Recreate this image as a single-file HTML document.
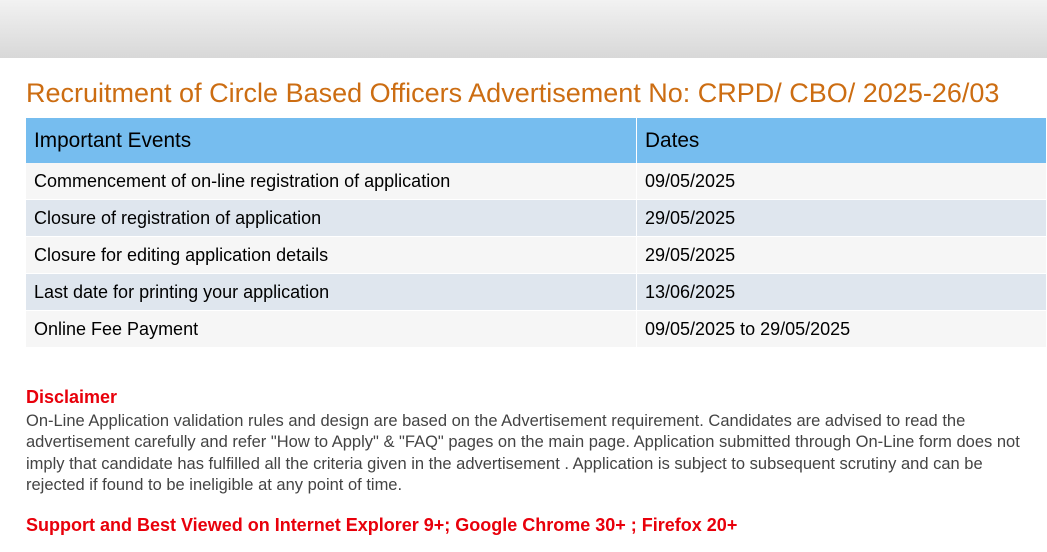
<!DOCTYPE html>
<html><head><style>
body{margin:0;width:1047px;height:552px;overflow:hidden;background:#fff;font-family:"Liberation Sans",Arial,sans-serif}
.top{height:58px;background:linear-gradient(#f2f2f2,#d8d8d8)}
h1{position:absolute;left:26px;top:78px;margin:0;font-weight:normal;font-size:27px;color:#cc6d12;white-space:nowrap}
table{position:absolute;left:26px;top:118px;width:1021px;border-collapse:collapse}
td{font-size:18px;color:#000;padding:0 0 0 8px;height:36px;border-right:1px solid #fff;border-bottom:1px solid #fff}
th{background:#76bdef;font-weight:normal;text-align:left;font-size:20.8px;height:45px;padding:0 0 0 8px;border-right:1px solid #fff}
tr.a td{background:#f6f6f6}tr.b td{background:#dfe6ee}
.d{position:absolute;left:26px;top:387px;font-size:18px;font-weight:bold;color:#e8000b}
.p{position:absolute;left:26px;top:411px;width:1000px;font-size:16.5px;line-height:21.3px;color:#444}
.s{position:absolute;left:26px;top:515px;font-size:18px;font-weight:bold;color:#e8000b;white-space:nowrap}
</style></head><body>
<div class="top"></div>
<h1>Recruitment of Circle Based Officers Advertisement No: CRPD/ CBO/ 2025-26/03</h1>
<table>
<tr><th style="width:602px">Important Events</th><th>Dates</th></tr>
<tr class="a"><td>Commencement of on-line registration of application</td><td>09/05/2025</td></tr>
<tr class="b"><td>Closure of registration of application</td><td>29/05/2025</td></tr>
<tr class="a"><td>Closure for editing application details</td><td>29/05/2025</td></tr>
<tr class="b"><td>Last date for printing your application</td><td>13/06/2025</td></tr>
<tr class="a"><td>Online Fee Payment</td><td>09/05/2025 to 29/05/2025</td></tr>
</table>
<div class="d">Disclaimer</div>
<div class="p">On-Line Application validation rules and design are based on the Advertisement requirement. Candidates are advised to read the advertisement carefully and refer "How to Apply" &amp; "FAQ" pages on the main page. Application submitted through On-Line form does not imply that candidate has fulfilled all the criteria given in the advertisement . Application is subject to subsequent scrutiny and can be rejected if found to be ineligible at any point of time.</div>
<div class="s">Support and Best Viewed on Internet Explorer 9+; Google Chrome 30+ ; Firefox 20+</div>
</body></html>
